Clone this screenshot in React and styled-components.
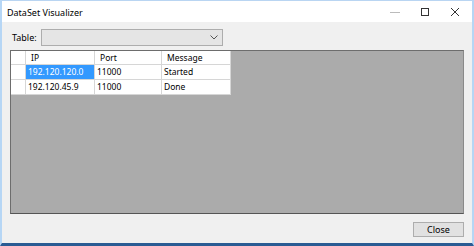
import React from "react";
import styled, { createGlobalStyle } from "styled-components";

const Global = createGlobalStyle`
  html, body { margin: 0; padding: 0; }
  body { width: 474px; height: 246px; overflow: hidden; background: #fff;
    font-family: "Noto Sans", "Open Sans", sans-serif; }
`;

const Window = styled.div`
  box-sizing: border-box;
  width: 474px;
  height: 246px;
  display: flex;
  flex-direction: column;
  border-top: 1px solid #b9d5f2;
  border-left: 2px solid #b6d6f5;
  border-right: 2px solid #b6d6f5;
  border-bottom: 3px solid #2a5b93;
  background: #f0f0f0;
`;

const TitleBar = styled.div`
  height: 21px;
  background: #fff;
  display: flex;
  align-items: center;
  flex-shrink: 0;
`;

const Title = styled.div`
  flex: 1;
  font-size: 9px;
  color: #000;
  padding-left: 5px;
  padding-top: 1px;
`;

const Controls = styled.div`
  display: flex;
  height: 100%;
  padding-right: 2px;
`;

const Ctrl = styled.div`
  width: 30px;
  height: 100%;
  display: flex;
  align-items: center;
  justify-content: center;
`;

const Body = styled.div`
  flex: 1;
  display: flex;
  flex-direction: column;
  padding: 7px 8px 6px 8px;
  min-height: 0;
`;

const TableRow = styled.div`
  display: flex;
  align-items: center;
  height: 17px;
  gap: 4px;
  padding-left: 2px;
`;

const Label = styled.span`
  font-size: 9px;
  color: #000;
`;

const Combo = styled.div`
  box-sizing: border-box;
  width: 182px;
  height: 17px;
  background: #e5e5e5;
  border: 1px solid #adadad;
  display: flex;
  align-items: center;
  justify-content: flex-end;
  padding-right: 4px;
`;

const GridPanel = styled.div`
  margin-top: 4px;
  flex: 1;
  background: #ababab;
  border: 1px solid #6d6d6d;
  border-right-color: #8a8a8a;
  border-bottom-color: #555;
  min-height: 0;
`;

const Grid = styled.div`
  display: grid;
  grid-template-columns: 15px 69px 67px 69px;
  width: max-content;
  background: #fff;
`;

const Cell = styled.div`
  box-sizing: border-box;
  height: ${(p) => (p.$head ? "14px" : "15px")};
  font-size: 8.5px;
  line-height: ${(p) => (p.$head ? "13px" : "14px")};
  padding-left: ${(p) => (p.$head ? "5px" : "2px")};
  border-right: 1px solid #d6d6d6;
  border-bottom: 1px solid #d6d6d6;
  color: ${(p) => (p.$sel ? "#fff" : "#000")};
  background: ${(p) => (p.$sel ? "#3399ff" : "#fff")};
  white-space: nowrap;
  overflow: hidden;
`;

const Footer = styled.div`
  display: flex;
  justify-content: flex-end;
  padding-top: 8px;
`;

const Button = styled.div`
  box-sizing: border-box;
  width: 51px;
  height: 15px;
  background: #e1e1e1;
  border: 1px solid #adadad;
  font-size: 9px;
  display: flex;
  align-items: center;
  justify-content: center;
  color: #000;
`;

const rows = [
  ["192.120.120.0", "11000", "Started"],
  ["192.120.45.9", "11000", "Done"],
];

export default function App() {
  return (
    <>
      <Global />
      <Window>
        <TitleBar>
          <Title>DataSet Visualizer</Title>
          <Controls>
            <Ctrl>
              <svg width="10" height="10" viewBox="0 0 10 10">
                <line x1="0" y1="5.5" x2="10" y2="5.5" stroke="#bbb" strokeWidth="1" />
              </svg>
            </Ctrl>
            <Ctrl>
              <svg width="10" height="10" viewBox="0 0 10 10">
                <rect x="1.5" y="1.5" width="7" height="7" fill="none" stroke="#333" strokeWidth="1" />
              </svg>
            </Ctrl>
            <Ctrl>
              <svg width="10" height="10" viewBox="0 0 10 10">
                <path d="M1 1L9 9M9 1L1 9" stroke="#333" strokeWidth="1" />
              </svg>
            </Ctrl>
          </Controls>
        </TitleBar>
        <Body>
          <TableRow>
            <Label>Table:</Label>
            <Combo>
              <svg width="8" height="5" viewBox="0 0 8 5">
                <path d="M0.5 0.5L4 4L7.5 0.5" fill="none" stroke="#555" strokeWidth="1" />
              </svg>
            </Combo>
          </TableRow>
          <GridPanel>
            <Grid>
              <Cell $head />
              <Cell $head>IP</Cell>
              <Cell $head>Port</Cell>
              <Cell $head>Message</Cell>
              {rows.map((r, i) => (
                <React.Fragment key={i}>
                  <Cell />
                  <Cell $sel={i === 0}>{r[0]}</Cell>
                  <Cell>{r[1]}</Cell>
                  <Cell>{r[2]}</Cell>
                </React.Fragment>
              ))}
            </Grid>
          </GridPanel>
          <Footer>
            <Button>Close</Button>
          </Footer>
        </Body>
      </Window>
    </>
  );
}
